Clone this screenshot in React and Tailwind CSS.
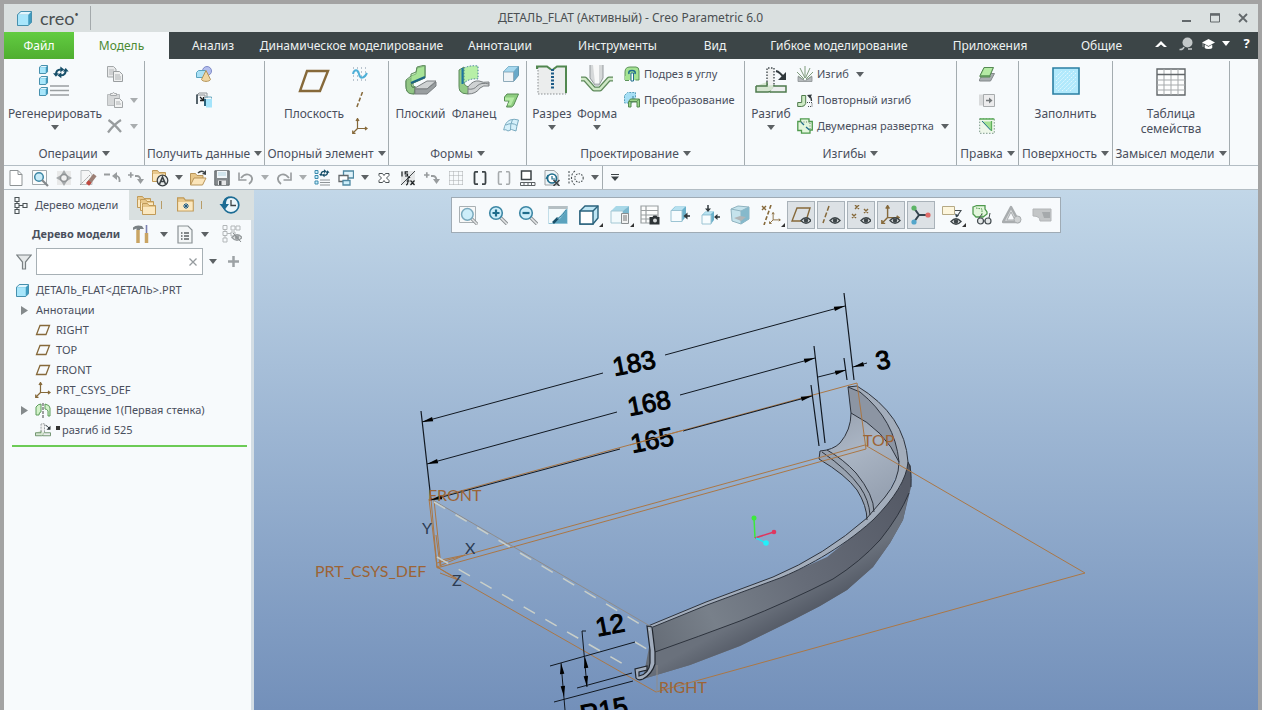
import React, { useState } from 'react'

const teal = '#1f6d8c'
const brown = '#86693a'
const orange = '#ab7745'

function Svg({ w = 16, h = 16, box, children }) {
  return (
    <svg width={w} height={h} viewBox={box || `0 0 ${w} ${h}`} fill="none" className="shrink-0" aria-hidden="true">
      {children}
    </svg>
  )
}

function Down({ pale, light }) {
  return (
    <Svg w={8} h={5}>
      <path d="M0 0h8L4 5z" fill={light ? '#fff' : pale ? '#a9adaf' : '#5c6164'} />
    </Svg>
  )
}

/* shared pieces */
const Cube = ({ x = 0, y = 0, s = 9 }) => (
  <g transform={`translate(${x} ${y})`} strokeLinejoin="round">
    <path d={`M.5 ${s * 0.25}L${s * 0.25} .5H${s - 0.5}V${s * 0.75}L${s * 0.75} ${s - 0.5}H.5z`} fill="#3f9cc0" stroke="#4790ae" />
    <path d={`M1 ${s * 0.25}L${s * 0.27} 1H${s - 1}L${s * 0.75} ${s * 0.25}z`} fill="#e3f6fd" />
    <path d={`M1 ${s * 0.25}H${s * 0.75}V${s - 1}H1z`} fill="#a8e6fb" />
  </g>
)
const Eye = ({ x = 0, y = 0, c = '#3d4548' }) => (
  <g transform={`translate(${x} ${y})`}>
    <path d="M0 3.500Q5 -2 10 3.500Q5 9 0 3.500z" fill="#eef0f1" stroke={c} strokeWidth="1.400" />
    <circle cx="5" cy="3.500" r="2.200" fill={c} />
  </g>
)
const Lens = ({ sign }) => (
  <>
    <path d="M12 12l7 7" stroke="#8b9093" strokeWidth="3.400" />
    <path d="M12.500 12.500l6.500 6.500" stroke="#e4e6e7" strokeWidth="1.600" />
    <circle cx="8" cy="8" r="6.300" fill="#cdeefa" stroke={sign ? '#3d87a5' : '#79a9bd'} strokeWidth="1.600" />
    {sign && <path d={sign === '+' ? 'M4.500 8h7M8 4.500v7' : 'M4.500 8h7'} stroke={teal} strokeWidth="2.200" />}
  </>
)
const FolderShape = ({ x = 0, y = 0 }) => (
  <g transform={`translate(${x} ${y})`}>
    <path d="M.5 2.500V.5h5l1.500 2h6.500v9H.5z" fill="#e8c88c" stroke="#c09a58" />
    <path d="M1 4h12v7H1z" fill="#fbe8c0" />
  </g>
)
const Spin = ({ x = 0, y = 0, k = 1 }) => (
  <g transform={`translate(${x} ${y}) scale(${k})`}>
    <path d="M3 9Q3 3.500 8 3.500M13 4q0 5.500-5 5.500" stroke="#174f69" strokeWidth="2" />
    <path d="M7.500 .5l4 3-4 3zM8.500 6.500l-4 3 4 3zM0 7.500h6L3 11zM10 5.500h6L13 2z" fill="#174f69" />
  </g>
)
const Csys = ({ x = 0, y = 0 }) => (
  <g transform={`translate(${x} ${y})`} stroke={brown} strokeWidth="1.200">
    <path d="M5.500 1v9.500H15M5.500 10.500L1 15M4 3l1.500-2.500L7 3M13 9l2 1.500-2 1.500M.7 12.500v2.800h2.800" />
  </g>
)

/* ribbon icons */
const RegenIcon = () => (
  <Svg w={32} h={32}>
    <Cube y={0} s={9} /><Cube y={11} s={9} /><Cube y={22} s={9} />
    <Spin x={14} y={1} k={0.98} />
    <path d="M11 21h19M11 25.500h19M11 30h19" stroke="#9a9fa1" strokeWidth="1.500" />
  </Svg>
)
const CopyIcon = () => (
  <Svg>
    <path d="M.5 .5h6l2.500 2.500v8H.5z" fill="#e8e9ea" stroke="#a3a7a9" />
    <path d="M2 4h5M2 6h5M2 8h5" stroke="#b5b8ba" />
    <path d="M6.500 5.500h6l3 3v7h-9z" fill="#eff0f0" stroke="#9a9ea0" />
    <path d="M8 9h5M8 11h6M8 13h6" stroke="#acb0b2" />
  </Svg>
)
const PasteIcon = () => (
  <Svg>
    <path d="M.5 2.500h12v11H.5z" fill="#d6d8d9" stroke="#b9bcbe" />
    <path d="M3.500 3.500v-2h2l1-1.200 1 1.200h2v2z" fill="#eee" stroke="#a6aaac" />
    <path d="M7.500 6.500h5l3 3v6h-8z" fill="#f2f3f3" stroke="#a1a5a7" />
    <path d="M9 10h4M9 12h5" stroke="#b0b3b5" />
  </Svg>
)
const DeleteIcon = () => (
  <Svg><path d="M1.500 2C6 5 10 9 14 14M14 2C9 5 5 9 1 14.500" stroke="#989c9e" strokeWidth="2.200" /></Svg>
)
const ShapesIcon = () => (
  <Svg>
    <circle cx="11" cy="5" r="4.500" fill="#b4beee" stroke="#7f8bc6" />
    <path d="M.5 6.500l2-2h7v7h-9z" fill="#a9e0f5" stroke="#5aa3bf" />
    <path d="M10 4.500L5.500 13.500c1 2.500 8 2.500 9 0z" fill="#f0d6a2" stroke="#b39459" />
  </Svg>
)
const CopyGeomIcon = () => (
  <Svg>
    <path d="M1 3l2-2h8v5" fill="#eef0f1" stroke="#8f9497" /><path d="M1 3h8v3" stroke="#8f9497" />
    <path d="M1 2.500v9.500" stroke="#45545d" strokeWidth="1.800" />
    <path d="M4 5l3 3M7.500 5v3.500H4" stroke="#222" strokeWidth="1.300" />
    <path d="M8 7h3v7H8z" fill="#2b637d" /><path d="M10 7h6v8.500h-6z" fill="#a4e4fb" />
    <path d="M8.500 6.500l2-1.500h5v1.500" stroke="#6ba8bf" />
  </Svg>
)
const PlaneIcon = () => (
  <Svg w={32} h={24}><path d="M9 2h21l-8 20H2z" stroke={brown} strokeWidth="2.400" /></Svg>
)
const CurveIcon = () => (
  <Svg>
    <path d="M1 2h14M1 6h14M1 10h14M1 14h14" stroke="#7d8ea0" strokeDasharray="1 3" />
    <path d="M1 8c1-5 5-5 6 0s5 5 8-1" stroke="#4fb0d8" strokeWidth="2" />
  </Svg>
)
const AxisIcon = () => (
  <Svg><path d="M10.500 0L4.500 16" stroke={brown} strokeWidth="1.500" strokeDasharray="4 2" /></Svg>
)
const FlatIcon = () => (
  <Svg w={32} h={30}>
    <path d="M1 16l5-3v7q1 3 5 2l-1 7q-6 0-8-3-1-2-1-5z" fill="#7fa779" stroke="#5d8a5c" />
    <path d="M6 11l5-2 1-6 8-2v11L8 18q-1 3 2 4H7q-3-2-1-6z" fill="#aee79d" stroke="#5d8a5c" />
    <path d="M1 15l5-4V9l5-2 1-5 8-2v13L6 19q0 4 4 4l-1 6q-6 0-7-3-1-2-1-5z" fill="#a2e08f" fillOpacity=".55" stroke="#5d8a5c" />
    <path d="M10 23l12-7h9l-9 8H10z" fill="#cfd2d3" stroke="#7a7f81" />
    <path d="M10 24h12l9-7v4l-9 8H10z" fill="#999ea0" stroke="#7a7f81" />
    <path d="M6 18l14-6" stroke="#1c6484" strokeWidth="2" />
  </Svg>
)
const FlangeIcon = () => (
  <Svg w={32} h={30}>
    <path d="M1 5l5-3v15q0 4 5 5l-1 7q-6 0-8-3-1-2-1-5z" fill="#93cb86" stroke="#5d8a5c" />
    <path d="M6 3Q12 0 20 1v13q-8-1-14 4z" fill="#b7efa7" stroke="#3a7a92" strokeDasharray="1.500 1.500" />
    <path d="M4.500 3v16" stroke="#1c76a3" strokeWidth="2" />
    <path d="M10 22q5-7 11-6 4 2 10 1v4q-6-1-9 2-4 6-12 6z" fill="#cfd2d3" stroke="#7a7f81" />
    <path d="M10 24q6 1 9-3 4-4 12-2" stroke="#7a7f81" />
  </Svg>
)
const ExtrudeIcon = () => (
  <Svg>
    <path d="M.5 6l5-5.500h10v9l-5 6z" fill="#6aa9c9" stroke="#5f97b0" />
    <path d="M.5 6h10v9.500H.5z" fill="#eff3f6" stroke="#8fabba" /><path d="M1 5.500l4.500-5h9.500l-4.500 5z" fill="#a7d8ee" />
  </Svg>
)
const TwistIcon = () => (
  <Svg>
    <path d="M1.500 5L4 2h11.500l-5 11.500-2 1.500H3.500L6 9H1.500z" fill="#8fce80" stroke="#568a53" />
    <path d="M2 5.500h9.500L8 13H4.500L7 8.500H2z" fill="#b5eba4" />
  </Svg>
)
const BoundaryIcon = () => (
  <Svg>
    <path d="M.7 12Q2 4 7 2q4-1.500 8.500 0-2 7-2.500 11-5-3-8 0-2-2-4.300-1z" fill="#d5f0fa" stroke="#7aabc0" />
    <path d="M9.500 1.500Q7 7 7.500 12M3 7q6-3 11 .5" stroke="#7aabc0" />
  </Svg>
)
const RipIcon = () => (
  <Svg w={32} h={30}>
    <path d="M2 2v27h28V2" fill="#ebeded" stroke="#8a8f91" strokeDasharray="1.500 1.500" />
    <path d="M14 1l2 4 2-4z" fill="#f7fafc" />
    <path d="M1 4V1.500h10l4 3M17 4.500l4-3h9V28" stroke="#51874f" strokeWidth="2" />
    <path d="M16.500 4v20" stroke="#1c5a86" strokeWidth="3" strokeDasharray="2 1.500" />
  </Svg>
)
const FormIcon = () => (
  <Svg w={32} h={30}>
    <path d="M9 0h13v13l-4 7h-4l-5-7z" fill="#d5d8d9" /><path d="M12 0h6v18h-4z" fill="#f7f8f8" />
    <path d="M9 0v13l5 7h4l4-7V0" stroke="#959a9d" />
    <path d="M0 14h4l9 10h6l9-10h4" stroke="#5f8a5c" strokeWidth="5" strokeLinejoin="round" />
    <path d="M0 14h4l9 10h6l9-10h4" stroke="#cfe8c6" strokeWidth="2.600" strokeLinejoin="round" />
  </Svg>
)
const ReliefIcon = () => (
  <Svg>
    <path d="M1 14V6Q1 1 6 1h6q3 0 3 4v9h-3.500" fill="#a6e393" stroke="#5d945b" />
    <path d="M1 10h4v4.500H1z" fill="#a6e393" />
    <path d="M7 15V7h2.500v8z" fill="#fff" stroke={teal} />
    <path d="M5 8q-1-3.500 3-3.500T11 8" stroke={teal} strokeWidth="1.600" />
    <path d="M1 14.500h4" stroke="#5d945b" />
  </Svg>
)
const ConvertIcon = () => (
  <Svg>
    <path d="M.5 3.500l3-3h8v5L8 11H.5z" fill="#a6dff5" stroke="#5aa0bb" strokeDasharray="2 1" />
    <path d="M9 4v4" stroke="#3c819c" />
    <path d="M4.500 15V9.500l2-2.500h9v8h-2.500V10h-6v5z" fill="#9ad68a" stroke="#568a53" />
    <path d="M5 9.500h8l2-2.500" stroke="#568a53" />
  </Svg>
)
const UnbendIcon = ({ s = 32 }) => (
  <Svg w={s} h={s === 32 ? 27 : 16} box="0 0 32 27">
    <path d="M12 18V1h7v17" fill="#f1f2f2" stroke="#454d51" strokeWidth="1.400" strokeDasharray="1.500 1.500" />
    <path d="M1 19h11v-4M1 19v6h12q6 0 6-7" fill="#d5e5d0" stroke="#4f7b4d" strokeWidth="1.500" />
    <path d="M19 19h12v6H15" stroke="#4f7b4d" strokeWidth="1.500" fill="#eceeee" />
    <path d="M21 4q4 1 8 7" stroke="#30383c" strokeWidth="2" /><path d="M31 5v8h-8z" fill="#30383c" />
  </Svg>
)
const BendIcon = () => (
  <Svg>
    <path d="M1 10l6 4M0 6l7 7M3 2l5 10M8 0v12M13 2L8.500 12M16 6l-7 7M15 10l-6 4" stroke="#7f9c7d" />
    <path d="M1 15.500v-5l7 4.500 7-4.500v5z" fill="#b5babc" stroke="#8b9193" strokeWidth=".8" />
  </Svg>
)
const RebendIcon = () => (
  <Svg>
    <path d="M.7 10.500h4V3.500h4v8q-1 3-4 3h-4z" fill="#cdeac4" stroke="#4f7b4d" />
    <path d="M10 10.500h5v4h-5" stroke="#454d51" strokeDasharray="1 1" />
    <path d="M14.500 9q0-4-2.500-5.500" stroke="#30383c" strokeWidth="1.300" /><path d="M10 3l5-.5-2 4z" fill="#30383c" />
  </Svg>
)
const FlatPatternIcon = () => (
  <Svg>
    <path d="M3.500 .8H12v2.700h3.300v8.500H13v3.200H4.500V12.500H.8v-9h2.700z" fill="#e3f6dc" stroke="#4f9a4e" strokeWidth="1.300" />
    <path d="M4 4l3 3M12.500 12L9 9" stroke={teal} strokeWidth="1.300" /><path d="M4 4h9v8" stroke="#6d7d75" strokeDasharray="1 1.500" />
  </Svg>
)
const OffsetIcon = () => (
  <Svg>
    <path d="M.5 13.500l4-6h11l-4 7.500H.5z" fill="#a8adaf" stroke="#83888a" />
    <path d="M1 9.500L5 1.500h9.500l-3.500 8v1.500H1z" fill="#6da766" stroke="#568a53" /><path d="M2 9l3.500-7h8L10.500 9z" fill="#b5eba4" />
  </Svg>
)
const ExtendIcon = () => (
  <Svg>
    <path d="M0 2.500h5v11H0" fill="#d9dbdc" /><path d="M4.500 2.500h11v12h-11z" fill="#ececed" stroke="#a7abad" />
    <path d="M7 8.500h3" stroke="#74797b" strokeWidth="1.500" /><path d="M10 5.500l3.500 3-3.500 3z" fill="#74797b" />
  </Svg>
)
const CornerIcon = () => (
  <Svg>
    <path d="M.7 .7h14.600v14.600H.7z" fill="#eef7ea" stroke="#7e998a" strokeDasharray="1.500 1.500" />
    <path d="M3 3.500h9v9z" fill="#a5e295" /><path d="M3 3L12 12.500" stroke={teal} />
    <path d="M.7 1h14.600M12.500 3v10" stroke="#5fae5c" strokeWidth="1.300" />
  </Svg>
)
const FillIcon = () => (
  <Svg w={28} h={28}>
    <path d="M1 1h26v26H1z" fill="#b1e9fc" stroke="#2b7fa2" strokeWidth="1.600" />
    <path d="M4 10l6-6M4 14L14 4M4 18L18 4M4 22L22 4M6 24L24 6M10 24l14-14M14 24l10-10M18 24l6-6" stroke="#e1f8ff" strokeDasharray="2 1" />
  </Svg>
)
const TableIcon = () => (
  <Svg w={30} h={28}>
    <path d="M1 1h28v26H1z" fill="#fdfefe" stroke="#62676a" strokeWidth="1.400" />
    <path d="M8 1v26M15 1v26M22 1v26M1 12h28M1 17h28M1 22h28" stroke="#a6aaac" /><path d="M1 6.500h28" stroke="#62676a" strokeWidth="1.500" />
  </Svg>
)

/* quick access icons */
const quick = {
  new: <Svg w={14} h={18}><path d="M1 1.500h8l4 4v11H1z" fill="#fff" stroke="#8e9395" /><path d="M9 1.500v4h4" stroke="#8e9395" /></Svg>,
  find: <Svg w={18} h={18}><path d="M1.500 1.500h14v14h-14z" fill="#fbfcfc" stroke="#a1a9ad" /><circle cx="8" cy="8" r="4.300" fill="#c9ecf9" stroke="#3d87a5" strokeWidth="1.500" /><path d="M11 11l6 6" stroke="#82888b" strokeWidth="2.200" /></Svg>,
  target: <Svg w={18} h={18}><path d="M2 2h14v14H2z" fill="#e8e9e9" /><path d="M9 1l3 5 5 3-5 3-3 5-3-5-5-3 5-3z" fill="#a6aaac" /><circle cx="9" cy="9" r="3.500" fill="#f0f0f0" stroke="#8f9395" strokeWidth="1.500" /></Svg>,
  erase: <Svg w={18} h={18}><path d="M2 1.500h8l3 4v10H2z" fill="#f5f6f6" stroke="#bbbfc1" /><path d="M1 16L11 6" stroke="#999" strokeDasharray="2 1" /><path d="M9 15l7-9" stroke="#9c8076" strokeWidth="4" /><path d="M8.500 15.500l2.500-3" stroke="#c0483f" strokeWidth="4" /></Svg>,
  minus: <Svg w={18} h={14}><path d="M1 3.500h6" stroke="#989c9e" strokeWidth="2" /><path d="M12 5h2q3 1 2.500 6" stroke="#989c9e" strokeWidth="1.800" /><path d="M9 5l5-4v8z" fill="#989c9e" /></Svg>,
  plus: <Svg w={18} h={14}><path d="M1 4h5.500M3.800 1.200v5.500" stroke="#989c9e" strokeWidth="1.700" /><path d="M8 5h2q3 0 3.500 4" stroke="#989c9e" strokeWidth="1.800" /><path d="M10 8h7l-3.500 5z" fill="#989c9e" /></Svg>,
  auto: <Svg w={18} h={18}><FolderShape x={1} y={1} /><circle cx="11.500" cy="11.500" r="5.300" fill="#e9ecec" stroke="#3c4346" strokeWidth="1.300" /><path d="M8.500 15l3-7 3 7M10 12.500h3" stroke="#3c4346" strokeWidth="1.600" /></Svg>,
  open: <Svg w={18} h={18}><path d="M1.500 16V4.500h5l1.500 2h6V9" fill="#e8c88c" stroke="#b8955a" /><path d="M1.500 16L5 9h12l-3.500 7z" fill="#fbe5ba" stroke="#b8955a" /><path d="M9 4q3-3 6-1" stroke="#3c4346" strokeWidth="1.500" /><path d="M13 5l4-4v5z" fill="#3c4346" /></Svg>,
  save: <Svg w={16} h={16}><path d="M.8 .8h14.400v14.400H.8z" fill="#858a8d" stroke="#62676a" /><path d="M3 1h10v7H3z" fill="#f1f6f9" /><path d="M4 3h8M4 5h8" stroke="#b3d3e0" /><path d="M4 10.500h8V15H4z" fill="#e6e7e8" /><path d="M5 11h2.500v4H5z" fill="#54595c" /></Svg>,
  undo: <Svg w={16} h={14}><path d="M3 7q5-6 10-2 3 4-2 8" stroke="#989c9e" strokeWidth="1.800" /><path d="M1 1.500V9h7.500" stroke="#989c9e" strokeWidth="1.600" /></Svg>,
  redo: <Svg w={16} h={14}><path d="M13 7Q8 1 3 5q-3 4 2 8" stroke="#989c9e" strokeWidth="1.800" /><path d="M15 1.500V9H7.500" stroke="#989c9e" strokeWidth="1.600" /></Svg>,
  regen: <Svg w={16} h={17}><path d="M1 1.500h3v3H1zM1 6.500h3v3H1zM1 12h3v3H1z" fill="#c9effc" stroke="#3c8bad" /><Spin x={5} y={0} k={0.66} /><path d="M6 11h10M6 13.500h10M6 16h10" stroke="#8f9497" /></Svg>,
  windows: <Svg w={16} h={16}><path d="M5.500 1h10v7h-10z" fill="#dff3fb" stroke="#4f89a3" strokeWidth="1.300" /><path d="M1 5.500h9v6H1z" fill="#fff" stroke="#62676a" strokeWidth="1.300" /><path d="M5 10.500h7V15H5z" fill="#cdeffb" stroke="#4f89a3" strokeWidth="1.300" /></Svg>,
  close: <Svg w={12} h={12}><path d="M1 1.500h3.500L6 3.500l1.500-2H11v2L8.500 6 11 8.500v2H7.500L6 8.500l-1.500 2H1v-2L3.500 6 1 3.500z" fill="#fff" stroke="#4b5255" /></Svg>,
  relations: <Svg w={16} h={16}><path d="M1 1h14v14H1z" fill="#e5e7e8" /><path d="M1 15L15 1" stroke="#44494c" /><path d="M2 1.500v5M5 6h2.500V4H5.200V1.800H8" stroke="#1d2224" strokeWidth="1.200" /><path d="M6 15q2 0 2-5t2-2M6.500 11h3M10.500 10.500l4 4.500M14.500 10.500l-4 4.500" stroke="#1d2224" strokeWidth="1.200" /></Svg>,
  grid: <Svg w={14} h={14}><path d="M.5 .5v13M4.500 .5v13M9.500 .5v13M13.500 .5v13M.5 .5h13M.5 4.500h13M.5 9.500h13M.5 13.500h13" stroke="#a9adaf" strokeDasharray="1 1" /></Svg>,
  brackets: <Svg w={14} h={16}><path d="M5 1.800H2.500q-1 0-1 1.500v9.400q0 1.500 1 1.500H5M9 1.800h2.500q1 0 1 1.500v9.400q0 1.500-1 1.500H9" stroke="#3c4346" strokeWidth="1.800" /></Svg>,
  bracketsOff: <Svg w={14} h={16}><path d="M5 1.800H2.500q-1 0-1 1.500v9.400q0 1.500 1 1.500H5M9 1.800h2.500q1 0 1 1.500v9.400q0 1.500-1 1.500H9" stroke="#a6aaac" strokeWidth="1.600" /></Svg>,
  layout: <Svg w={16} h={16}><path d="M1.500 1h9.500v8.500H1.500z" fill="#fff" stroke="#3c4346" strokeWidth="1.500" /><path d="M.5 12.500h14.500v3H.5zM4 12.500v3M8 12.500v3M11.500 12.500v3" stroke="#5c6164" /></Svg>,
  history: <Svg w={16} h={16}><path d="M1 .5h9l4 3.500v11H1z" fill="#eef4f7" stroke="#9ba1a4" /><circle cx="8" cy="8.500" r="4.500" stroke={teal} strokeWidth="1.700" fill="#fff" /><path d="M8 6v3h3M2 9l2-4" stroke={teal} strokeWidth="1.200" /><path d="M9.500 10l6 6M15.500 10l-6 6" stroke="#3c4346" strokeWidth="1.500" /></Svg>,
  pattern: <Svg w={16} h={16}><path d="M1 1v14M7 1Q3.500 3.500 3.500 8T7 15" stroke="#4b5255" strokeWidth="1.100" strokeDasharray="2 1.500" /><circle cx="11" cy="8" r="4.200" stroke="#4b5255" strokeWidth="1.100" strokeDasharray="1.500 1.200" /></Svg>,
}

/* graphics toolbar icons, all on a 20px square */
const graphics = [
  ['Вписать', <><path d="M1.500 1.500h16v16h-16z" fill="#f7f8f8" stroke="#a9b0b3" /><g transform="translate(2 2) scale(.92)"><Lens /></g></>],
  ['Увеличить', <Lens sign="+" />],
  ['Уменьшить', <Lens sign="-" />],
  ['Перерисовать', <><path d="M.5 1h19v18H.5z" fill="#8fc3d6" /><path d="M1 4h17L6 18H1z" fill="#f3fafc" /><path d="M.5 1h19v3H.5z" fill="#b5bfc3" /><path d="M19 4v14H6Q14 14 19 4" fill="#5ba3be" /><path d="M5 18l5-5" stroke="#174f69" strokeWidth="2.600" /><path d="M9 14q6-3 9-9" stroke="#3d87a5" /></>],
  ['Стиль отображения', <><path d="M1 6l5-5h13v12l-5 6H1z" fill="#bfe6f4" stroke="#2b637d" strokeWidth="1.400" /><path d="M1 6h13v13H1z" fill="#fff" stroke="#2b637d" strokeWidth="1.400" /><path d="M14 6l5-5" stroke="#2b637d" strokeWidth="1.400" /></>, true],
  ['Сохраненные ориентации', <><path d="M1 6l5-5h13L14 6z" fill="#a8d8e8" /><path d="M1 6h12v12H1z" fill="#f2fafc" stroke="#a4c8d4" /><path d="M13 6l6-5v8h-6z" fill="#7cb8ce" /><path d="M11.500 8.500h7v10h-7z" fill="#f1f2f2" stroke="#8a8f91" /><path d="M13 11h4M13 13h4M13 15h4" stroke="#777" /></>, true],
  ['Менеджер видов', <><path d="M1 1h17v17H1zM1 5.500h17M1 10h17M1 14h10M6 1v17" fill="#fbfcfc" stroke="#9a9fa1" strokeWidth="1.200" /><path d="M9.500 12h3l1-1.500h3l1 1.500h2v7.500h-10z" fill="#2d3336" /><circle cx="15" cy="15.500" r="2" fill="#d5d8d9" /></>],
  ['Нормаль вида', <><path d="M1 5.500l4-4h11v10l-4 5H1z" fill="#6bb1cb" /><path d="M1 5.500h11v11H1z" fill="#f7fcfe" stroke="#9cc4d3" /><path d="M2 5l3.500-3.500H15.500L12 5z" fill="#b7e1f0" /><path d="M20 11h-4" stroke="#30383c" strokeWidth="1.600" /><path d="M13.500 11l4-3.500v7z" fill="#30383c" /></>],
  ['Ориентация', <><path d="M2 10l3.500-3.500H14V15l-3 4H2z" fill="#6bb1cb" /><path d="M2 10h9v9H2z" fill="#f7fcfe" stroke="#9cc4d3" /><path d="M3 9.500l3-3h7.500l-3 3z" fill="#b7e1f0" /><path d="M8 0v4M20 12h-4" stroke="#30383c" strokeWidth="1.500" /><path d="M8 7L5 3.500h6zM14 12l3.500-3v6z" fill="#30383c" /></>],
  ['Перспектива', <><path d="M1 4l7-3 11 1v12l-8 5-9-3z" fill="#c5e3ec" stroke="#8fb3c0" /><path d="M1 4l10 2v13M11 6l8-4" stroke="#8fb3c0" /><path d="M11 6l8-4v12l-8 5z" fill="#86b9cb" /><path d="M4 13l6-2 6 1-5 4z" fill="#b0b5b7" /></>],
  ['Отображение опорных элементов', <><path d="M1 1l4 4M5 1L1 5" stroke={brown} strokeWidth="1.400" /><path d="M10 0L3 20" stroke={brown} strokeWidth="1.600" strokeDasharray="4 2" /><g transform="translate(8 7) scale(.75)"><Csys /></g></>, true],
  ['Плоскости', <><path d="M6 3h13l-4 13H1z" stroke={brown} strokeWidth="1.400" /><Eye x={10} y={12} /></>, false, true],
  ['Оси', <><path d="M8 1L2 18" stroke={brown} strokeWidth="1.500" strokeDasharray="5 2" /><Eye x={9} y={12} /></>, false, true],
  ['Точки', <><path d="M4 0l4 4M8 0L4 4M13 4l4 4M17 4l-4 4M1 9l4 4M5 9l-4 4" stroke={brown} strokeWidth="1.400" /><Eye x={10} y={12} /></>, false, true],
  ['Системы координат', <><g transform="scale(1.200)"><Csys /></g><Eye x={9} y={12} /></>, false, true],
  ['Центр вращения', <><path d="M3 3l5 7h8M8 10l-5 7" stroke="#33434d" strokeWidth="2" /><circle cx="3" cy="3" r="2.600" fill="#5cb466" /><circle cx="17" cy="10" r="2.600" fill="#df6b68" /><circle cx="3" cy="17" r="2.600" fill="#54a6cb" /></>, false, true],
  ['Аннотации', <><path d="M.5 1.500h12v8H.5z" fill="#fdf6dd" stroke="#b5a985" /><path d="M13 5.500h6l-4 6" stroke="#454d51" strokeWidth="1.200" /><path d="M13 8.500l1 4 3-2z" fill="#33434d" /><Eye x={9} y={13} /></>, true],
  ['Сечения', <><path d="M1 2l4-1.500h8v3.500l2 3v2l-4 3H4L1 9z" fill="#e3f6dc" stroke="#4f9a4e" strokeWidth="1.300" /><path d="M4 3l6 1v8" stroke="#4f9a4e" strokeDasharray="1.500 1" /><circle cx="8.500" cy="16" r="3" fill="#e3e7e8" stroke="#454d51" strokeWidth="1.200" /><circle cx="16" cy="16" r="3" fill="#e3e7e8" stroke="#454d51" strokeWidth="1.200" /><path d="M7 13l3-4M17 13l1-5M11.500 16h1.500" stroke="#454d51" /></>],
  ['Имитация', <><path d="M9 2l8 15H1z" stroke="#a9adaf" strokeWidth="2.500" strokeLinejoin="round" fill="#d9dbdc" /><path d="M9 7l4 8H5z" fill="#f7f9fb" stroke="#a9adaf" /><circle cx="15.500" cy="14.500" r="3.500" fill="#cfd2d3" stroke="#a9adaf" /></>],
  ['Геометрия', <><path d="M1 4h18v12H8q0-5-7-5z" fill="#c3c6c7" stroke="#b3b6b8" /><path d="M10 7h8v6h-6z" fill="#a6aaac" /></>],
]

function RibbonGroup({ title, className, children }) {
  return (
    <section className={`flex shrink-0 flex-col border-r border-[#a4acb0] ${className}`} aria-label={title}>
      <div className="flex h-[81px]">{children}</div>
      <button className="flex h-[23px] items-center justify-center gap-1 whitespace-nowrap">
        {title}
        <Down />
      </button>
    </section>
  )
}

function BigButton({ icon, label, menu, className }) {
  return (
    <button className={`flex shrink-0 flex-col items-center ${className}`}>
      <span className="flex h-[45px] items-start justify-center pt-1">{icon}</span>
      <span className="text-center leading-[15px] whitespace-nowrap">{label}</span>
      {menu && <span className="pt-1"><Down /></span>}
    </button>
  )
}

function SmallButton({ icon, label, title, menu, pale }) {
  return (
    <button className="flex h-[26px] items-center gap-1 text-[11px] whitespace-nowrap" aria-label={title || label}>
      {icon}
      {label}
      {menu && <span className="pl-[3px]"><Down pale={pale} /></span>}
    </button>
  )
}

const tabs = [
  ['Анализ', 'w-[88px]'],
  ['Динамическое моделирование', 'w-[189px]'],
  ['Аннотации', 'w-[108px]'],
  ['Инструменты', 'w-[127px]'],
  ['Вид', 'w-[68px]'],
  ['Гибкое моделирование', 'w-[180px]'],
  ['Приложения', 'w-[122px]'],
  ['Общие', 'w-[101px]'],
]

function TitleBar() {
  return (
    <header className="flex h-[28px] shrink-0 items-center bg-[#dae0e0]">
      <div className="flex h-[24px] w-[87px] items-center gap-2 border-r border-[#a3a9ab] pl-[13px]">
        <Svg w={15} h={15}><Cube s={15} /></Svg>
        <span className="font-[Lato,sans-serif] text-[18px] leading-5 text-[#4b5052]">creo<sup className="-top-2 text-[7px]">•</sup></span>
      </div>
      <h1 className="flex-1 text-center text-[12px] text-[#4a4f52]">ДЕТАЛЬ_FLAT (Активный) - Creo Parametric 6.0</h1>
      <div className="flex w-[88px] items-center gap-3 pl-[9px]">
        <button aria-label="Свернуть" className="flex w-4 justify-center">
          <Svg w={14} h={14}><path d="M2 10h9" stroke="#62686b" strokeWidth="2" /></Svg>
        </button>
        <button aria-label="Развернуть" className="flex w-4 justify-center">
          <Svg w={12} h={12}><path d="M1.500 2h9v8h-9z" stroke="#62686b" /><path d="M1 2.500h10" stroke="#62686b" strokeWidth="2.500" /></Svg>
        </button>
        <button aria-label="Закрыть" className="flex w-4 justify-center">
          <Svg w={10} h={10}><path d="M1 1l8 8M9 1L1 9" stroke="#62686b" strokeWidth="1.800" /></Svg>
        </button>
      </div>
    </header>
  )
}

function TabBar() {
  return (
    <nav className="flex h-[27px] shrink-0 items-stretch bg-[#3c4547] text-[12px] whitespace-nowrap text-[#eef2f2]">
      <button className="w-[70px] shrink-0 bg-linear-to-b from-[#62cc41] to-[#4fae30] text-white">Файл</button>
      <button className="w-[95px] shrink-0 bg-[#f7fafc] text-[#4c8a32]">Модель</button>
      {tabs.map(([name, width]) => (
        <button key={name} className={`${width} flex shrink-0 items-center justify-center`}>{name}</button>
      ))}
      <div className="flex flex-1 items-center justify-end pr-[7px] pb-[4px]">
        <button aria-label="Свернуть ленту" className="w-[24px]">
          <Svg w={12} h={7}><path d="M0 7l6-6 6 6H9L6 4.500 3 7z" fill="#fff" /></Svg>
        </button>
        <button aria-label="Поиск" className="w-[23px]">
          <Svg w={14} h={14}><circle cx="8.500" cy="5.500" r="5" fill="#c3c8c9" /><path d="M5 10q-1 3-4.500 2.500M9 12h4" stroke="#c3c8c9" strokeWidth="1.500" /></Svg>
        </button>
        <button aria-label="Обучение" className="w-[20px]">
          <Svg w={13} h={10}><path d="M0 3.500L6.500 0 13 3.500 6.500 7z" fill="#fff" /><path d="M3 6v3q3.500 2 7 0V6L6.500 8zM1 4v4" fill="#fff" stroke="#fff" strokeWidth=".5" /></Svg>
        </button>
        <button aria-label="Меню справки" className="w-[20px]"><Down light /></button>
        <button className="w-[9px] text-[13px] font-bold text-white">?</button>
      </div>
    </nav>
  )
}

function Ribbon() {
  return (
    <div className="flex h-[107px] shrink-0 border-b border-[#b3bdc4] pt-[2px]">
      <RibbonGroup title="Операции" className="w-[141px]">
        <BigButton className="ml-[5px] w-[92px]" icon={<RegenIcon />} label="Регенерировать" menu />
        <div className="ml-[6px]">
          <SmallButton title="Копировать" icon={<CopyIcon />} />
          <SmallButton title="Вставить" icon={<PasteIcon />} menu pale />
          <SmallButton title="Удалить" icon={<DeleteIcon />} menu pale />
        </div>
      </RibbonGroup>
      <RibbonGroup title="Получить данные" className="w-[120px]">
        <div className="ml-[51px]">
          <SmallButton title="Определяемый пользователем элемент" icon={<ShapesIcon />} />
          <SmallButton title="Копировать геометрию" icon={<CopyGeomIcon />} />
        </div>
      </RibbonGroup>
      <RibbonGroup title="Опорный элемент" className="w-[124px]">
        <BigButton className="ml-[16px] w-[66px]" icon={<span className="pt-1"><PlaneIcon /></span>} label="Плоскость" />
        <div className="ml-[5px]">
          <SmallButton title="Эскиз" icon={<CurveIcon />} />
          <SmallButton title="Ось" icon={<AxisIcon />} />
          <SmallButton title="Система координат" icon={<Svg><Csys /></Svg>} />
        </div>
      </RibbonGroup>
      <RibbonGroup title="Формы" className="w-[138px]">
        <BigButton className="ml-[4px] w-[55px]" icon={<FlatIcon />} label="Плоский" />
        <BigButton className="w-[52px]" icon={<FlangeIcon />} label="Фланец" />
        <div className="ml-[3px]">
          <SmallButton title="Вытянуть" icon={<ExtrudeIcon />} />
          <SmallButton title="Скрутить" icon={<TwistIcon />} />
          <SmallButton title="По границам" icon={<BoundaryIcon />} />
        </div>
      </RibbonGroup>
      <RibbonGroup title="Проектирование" className="w-[218px]">
        <BigButton className="ml-[2px] w-[46px]" icon={<RipIcon />} label="Разрез" menu />
        <BigButton className="w-[44px]" icon={<FormIcon />} label="Форма" menu />
        <div className="ml-[5px]">
          <SmallButton icon={<ReliefIcon />} label="Подрез в углу" />
          <SmallButton icon={<ConvertIcon />} label="Преобразование" />
        </div>
      </RibbonGroup>
      <RibbonGroup title="Изгибы" className="w-[212px]">
        <BigButton className="w-[52px]" icon={<span className="pt-[2px]"><UnbendIcon /></span>} label="Разгиб" menu />
        <div>
          <SmallButton icon={<BendIcon />} label="Изгиб" menu />
          <SmallButton icon={<RebendIcon />} label="Повторный изгиб" />
          <SmallButton icon={<FlatPatternIcon />} label="Двумерная развертка" menu />
        </div>
      </RibbonGroup>
      <RibbonGroup title="Правка" className="w-[62px]">
        <div className="ml-[22px]">
          <SmallButton title="Сместить" icon={<OffsetIcon />} />
          <SmallButton title="Продлить" icon={<ExtendIcon />} />
          <SmallButton title="Угол" icon={<CornerIcon />} />
        </div>
      </RibbonGroup>
      <RibbonGroup title="Поверхность" className="w-[94px]">
        <BigButton className="w-full" icon={<span className="pt-[2px]"><FillIcon /></span>} label="Заполнить" />
      </RibbonGroup>
      <RibbonGroup title="Замысел модели" className="w-[117px]">
        <BigButton className="w-full" icon={<span className="pt-[3px]"><TableIcon /></span>} label={<>Таблица<br />семейства</>} />
      </RibbonGroup>
    </div>
  )
}

const quickItems = [
  'new', 'find', 'target', 'erase', 'minus', 'plus', 'auto', 'menu', 'open', 'save', 'undo', 'menu-pale',
  'redo', 'menu-pale', 'regen', 'windows', 'menu', 'close', 'relations', 'plus', 'grid', 'brackets',
  'bracketsOff', 'layout', 'history', 'pattern', 'menu',
]

function QuickBar() {
  return (
    <div className="flex h-[24px] shrink-0 items-stretch border-b border-[#b3bdc4]">
      {quickItems.map((item, i) => (
        <button key={i} aria-label={item} className={`flex shrink-0 items-center justify-center ${item.startsWith('menu') ? 'w-[14px]' : 'w-[24px]'}`}>
          {item.startsWith('menu') ? <Down pale={item === 'menu-pale'} /> : quick[item]}
        </button>
      ))}
      <button aria-label="Настроить панель" className="flex w-[24px] items-center justify-center border-l border-[#a4acb0]">
        <Svg w={8} h={7}><path d="M0 .5h8" stroke="#3c4346" /><path d="M0 2.500h8L4 7z" fill="#3c4346" /></Svg>
      </button>
    </div>
  )
}

const SmallPlane = () => <Svg w={16} h={16}><path d="M5 3.500h9.500L11 12.500H1.500z" stroke={brown} strokeWidth="1.300" /></Svg>

const tree = [
  { label: 'Аннотации', arrow: true },
  { label: 'RIGHT', icon: <SmallPlane /> },
  { label: 'TOP', icon: <SmallPlane /> },
  { label: 'FRONT', icon: <SmallPlane /> },
  { label: 'PRT_CSYS_DEF', icon: <Svg><Csys /></Svg> },
  {
    label: 'Вращение 1(Первая стенка)',
    arrow: true,
    icon: <Svg><path d="M1 5q2-3 5-3v8q-2 0-2 3H1zM10 2q5 1 5 4v8h-2V9q-1-2-3-2z" fill="#d3f2ca" stroke="#5d9c5b" /><path d="M8 1v15" stroke="#444" strokeDasharray="3 1" /></Svg>,
  },
  { label: 'разгиб id 525', mark: true, icon: <UnbendIcon s={16} /> },
]

function Sidebar() {
  const [query, setQuery] = useState('')

  return (
    <aside className="flex w-[250px] shrink-0 flex-col border-r-[3px] border-[#d3dde4] bg-[#f7fafc]">
      <div className="-mr-[3px] flex h-[30px] bg-[#d9e0e0]">
        <button className="flex w-[125px] items-center gap-[7px] bg-[#f7fafc] pl-[10px] text-[11px] whitespace-nowrap">
          <Svg w={14} h={18}><path d="M1 1.500h4v4H1zM1 7.500h4v4H1zM1 13.500h4v4H1zM9 7.500h4v4H9zM3 5.500v2M3 11.500v2M5 9.500h4" stroke="#4b5255" strokeWidth="1.100" /></Svg>
          Дерево модели
        </button>
        <button aria-label="Папки" className="flex w-[40px] items-center gap-1 pl-[8px]">
          <Svg w={20} h={20}><FolderShape x={0} y={1} /><FolderShape x={3} y={4} /><FolderShape x={5} y={8} /></Svg>
          <span className="h-2 w-px bg-[#b79c68]" />
        </button>
        <button aria-label="Избранное" className="flex w-[40px] items-center gap-1 pl-[8px]">
          <Svg w={20} h={18}><g transform="scale(1.200)"><FolderShape x={0} y={1} /></g><path d="M9 7v6M6 10h6M7 8l4 4M11 8l-4 4" stroke="#1c5a86" /></Svg>
          <span className="h-2 w-px bg-[#b79c68]" />
        </button>
        <button aria-label="История" className="flex flex-1 items-center pl-[10px]">
          <Svg w={22} h={20}><circle cx="12" cy="10" r="7.800" fill="#eaf5fa" stroke="#1c6c94" strokeWidth="1.700" /><path d="M12 5v5.500h5" stroke="#3c4346" strokeWidth="1.300" /><path d="M11 1Q4 2 4 9H.5l5 6 4.500-6H7q0-5 4-8z" fill="#1c6c94" /></Svg>
        </button>
      </div>

      <div className="flex h-[28px] items-center pl-[28px]">
        <h2 className="w-[100px] text-[11px] font-bold whitespace-nowrap">Дерево модели</h2>
        <button aria-label="Настройки" className="flex w-[45px] items-center gap-[8px]">
          <Svg w={20} h={20}>
            <path d="M6 6v13" stroke="#c9a463" strokeWidth="3.500" /><path d="M1 3.500q3-3 9-1.500l2 3H8v1H4.500V4.500L1 6z" fill="#7a8184" />
            <path d="M14.500 1v8" stroke="#7a80b0" strokeWidth="1.600" /><path d="M14.500 9v10" stroke="#c9a463" strokeWidth="3.500" />
          </Svg>
          <Down />
        </button>
        <button aria-label="Показать" className="flex w-[45px] items-center gap-[8px]">
          <Svg w={16} h={19}><path d="M1 1h10l4 4v13H1z" fill="#f3f6f7" stroke="#8a9194" strokeWidth="1.200" /><path d="M4 8h1.500M4 11h1.500M4 14h1.500M7 8h5M7 11h5M7 14h5" stroke="#5c6164" strokeWidth="1.300" /></Svg>
          <Down />
        </button>
        <button aria-label="Скрыть дерево">
          <Svg w={20} h={20}><path d="M1 1.500h4v4H1zM1 7.500h4v4H1zM1 14h4v4H1zM9 2h4v4H9zM14 2h4v4h-4zM9 8h4v4H9zM3 5.500v2M3 11.500V14M5 9.500h4" stroke="#b3b7b9" /><Eye x={10} y={10} c="#999ea0" /><path d="M11 9l8 9" stroke="#888d8f" /></Svg>
        </button>
      </div>

      <div className="flex h-[27px] items-center pl-[12px]">
        <Svg w={16} h={16}><path d="M.7 1h14.600L9.500 8v7h-3V8z" fill="#e5e8e9" stroke="#7a8083" strokeWidth="1.200" /></Svg>
        <label className="ml-1 flex h-[27px] w-[167px] items-center border border-[#a7b0b5] bg-white">
          <input
            type="text"
            aria-label="Фильтр дерева"
            className="w-full min-w-0 flex-1 px-1 text-[12px] outline-none"
            value={query}
            onChange={(e) => setQuery(e.target.value)}
          />
          <button aria-label="Очистить" className="px-[5px]" onClick={() => setQuery('')}>
            <Svg w={8} h={8}><path d="M.5 .5l7 7M7.500 .5l-7 7" stroke="#959b9e" strokeWidth="1.300" /></Svg>
          </button>
        </label>
        <button aria-label="Варианты фильтра" className="ml-[6px]"><Down /></button>
        <button aria-label="Добавить" className="ml-[11px]">
          <Svg w={11} h={11}><path d="M5.500 0v11M0 5.500h11" stroke="#9da2a5" strokeWidth="2.500" /></Svg>
        </button>
      </div>

      <ul className="mt-[5px] text-[11px] leading-5 whitespace-nowrap text-[#4a4f5c]">
        <li className="flex items-center gap-[7px] pl-[12px]">
          <Svg w={13} h={13}><Cube s={13} /></Svg>
          ДЕТАЛЬ_FLAT&lt;ДЕТАЛЬ&gt;.PRT
        </li>
        {tree.map((node) => (
          <li key={node.label} className="flex h-5 items-center pl-[16px]">
            <span className="flex w-4 shrink-0 items-center pl-[1px]">
              {node.arrow && <Svg w={7} h={9}><path d="M0 0v9l7-4.500z" fill="#858a8c" /></Svg>}
            </span>
            {node.icon && <span className="mr-1 -ml-px flex w-[17px] shrink-0">{node.icon}</span>}
            {node.mark && <span className="mr-[2px] mb-1 size-1 bg-[#333]" />}
            {node.label}
          </li>
        ))}
      </ul>
      <div className="mt-[5px] mr-[4px] ml-[8px] h-[2px] bg-[#6ccb56]" />
    </aside>
  )
}

function GraphicsBar() {
  return (
    <div className="relative z-10 flex h-[36px] items-center gap-[2px] border border-[#9fabb5] bg-[#f7fafc] pr-[4px] pl-[2px]">
      {graphics.map(([name, art, menu, on]) => (
        <button
          key={name}
          aria-label={name}
          aria-pressed={!!on}
          className={`relative flex h-[28px] items-center justify-center ${menu ? 'w-[29px]' : 'w-[28px]'} ${on ? 'border border-[#a9b2b9] bg-[#dce1e5]' : ''}`}
        >
          <Svg w={20} h={20}>{art}</Svg>
          {menu && <span className="absolute right-0 bottom-[2px]"><Svg w={4} h={4}><path d="M4 0v4H0z" fill="#333" /></Svg></span>}
        </button>
      ))}
    </div>
  )
}

// arrowhead with its tip on x,y; a is the direction in degrees
const Tip = ({ x, y, a }) => <path d="M0 0l-11 -2.200v4.400z" transform={`translate(${x} ${y}) rotate(${a})`} fill="#000" />

const Dim = ({ x, y, children }) => (
  <text
    transform={`translate(${x} ${y}) rotate(-11)`}
    textAnchor="middle"
    dominantBaseline="central"
    className="font-['Liberation_Sans',sans-serif] text-[26px]"
    fill="#000"
    stroke="#000"
    strokeWidth="1"
  >
    {children}
  </text>
)

function Model() {
  return (
    <svg width="1004" height="520" viewBox="254 190 1004 520" fill="none" className="absolute top-0 left-0" role="img" aria-label="Модель детали">
      <defs>
        <linearGradient id="wall" x1="650" y1="640" x2="912" y2="500" gradientUnits="userSpaceOnUse">
          <stop offset="0" stopColor="#666d77" />
          <stop offset=".22" stopColor="#78808a" />
          <stop offset=".55" stopColor="#666c78" />
          <stop offset="1" stopColor="#555a66" />
        </linearGradient>
        <linearGradient id="lower" x1="750" y1="615" x2="765" y2="642" gradientUnits="userSpaceOnUse">
          <stop offset="0" stopColor="#6a717c" />
          <stop offset="1" stopColor="#515763" />
        </linearGradient>
        <linearGradient id="inside" x1="840" y1="400" x2="890" y2="490" gradientUnits="userSpaceOnUse">
          <stop offset="0" stopColor="#959eac" />
          <stop offset=".5" stopColor="#aab5c4" />
          <stop offset="1" stopColor="#97a2b2" />
        </linearGradient>
      </defs>

      {/* bent flange, seen from inside */}
      <path d="M848 387L851 413Q851 430 840 443Q833 450 820 451L819 459Q846 475 857 490Q867 506 867 520L886 497L899 470L900 460L893 436L880 413L860 392z" fill="url(#inside)" />
      <path d="M848 387L851 413Q885 430 899 462Q895 420 860 392z" fill="#8c95a3" />
      <path d="M820 451L819 459Q846 475 857 490Q867 506 867 520L874 512Q873 495 856 473Q843 459 827 450z" fill="#98a2b0" />

      {/* outer wall */}
      <path d="M908 462L911 466V487L903 520L890 543L873 567L847 590L820 606L793 620L740 646L690 665L643 679L653 626L707 605L780 578L827 557L873 520L900 487z" fill="url(#wall)" />
      <path d="M910 487L903 520L890 543L873 567L847 590L820 606L793 620L740 646L690 665L643 679Q655 672 655 652Q700 636 740 621Q790 601 833 579Q860 562 880 540Q900 515 909 493z" fill="url(#lower)" />
      <path d="M848 387L857 386Q905 415 908 462Q906 487 873 520C840 550 800 570 780 578L707 605L653 627L648 626L706 602L773 577Q825 555 867 518L885 497Q899 480 899 462Q895 420 860 392z" fill="#a3adbb" />
      <g stroke="#2d333d">
        <path d="M848 387L857 386Q905 415 908 462Q906 487 873 520C840 550 800 570 780 578L707 605L653 627" />
        <path d="M848 387L860 392Q895 420 899 462Q899 480 885 497L867 518Q825 555 773 577L706 602L648 626" />
        <path d="M908 462Q912 468 911 487" />
        <path d="M848 387L851 413Q851 430 840 443Q833 450 820 451L819 459Q846 475 857 490Q867 506 867 520" />
        <path d="M851 413Q885 430 899 462M822 452Q848 470 860 487Q869 500 870 515M827 450Q843 459 856 473Q874 495 874 512" />
        <path d="M909 493Q900 515 880 540Q860 562 833 579Q790 601 740 621Q700 636 655 652" />
      </g>
      <path d="M647 626L652 627L655 652V664Q652 674 643 679Q638 681 636 678L635 669L647 666V670L639 672V676Q649 674 650 663V650z" fill="#a2adbd" stroke="#20252d" strokeWidth="1.200" />

      {/* datum planes */}
      <g stroke={orange}>
        <path d="M431 499L857 383L866 449L437 568z" />
        <path d="M437 563L865 445L1085 573L656 692L437 567L429 499M434 500l7 67M437 567l28-12-24 5M437 567l21 13-18-7M436 535l4 30" />
      </g>
      <path d="M431 499L650 626M657 665V692" stroke="#8e8c8b" />
      <path d="M434 502L650 630M437 557L630 668M635 642l12 7" stroke="#c9cfc9" strokeWidth="1.500" strokeDasharray="13 12" />

      {/* dimensions */}
      <g stroke="#111821">
        <path d="M421 411L431 500M844 293L854 380M814 346L825 443M811 385L819 446M844 358L847 380" strokeWidth="1.200" />
        <path d="M422 422L603 373M665 355L845 306M427 464L617 412M680 395L815 358M431 500L620 449M683 431L812 396" />
        <path d="M818 377L846 370M867 363L853 367" />
        <path d="M586 631h-4L587 687M550 666L635 642M577 688L632 673M554 702L633 681M561 663L565 710" />
      </g>
      <Tip x={422} y={422} a={165} />
      <Tip x={845} y={306} a={-15} />
      <Tip x={427} y={464} a={165} />
      <Tip x={815} y={358} a={-15} />
      <Tip x={431} y={500} a={165} />
      <Tip x={812} y={396} a={-15} />
      <Tip x={846} y={370} a={-15} />
      <Tip x={853} y={367} a={165} />
      <Tip x={585} y={657} a={-96} />
      <Tip x={587} y={687} a={84} />
      <Tip x={561} y={663} a={-96} />
      <Tip x={564} y={697} a={84} />
      <Dim x={634} y={363}>183</Dim>
      <Dim x={649} y={403}>168</Dim>
      <Dim x={652} y={440}>165</Dim>
      <Dim x={883} y={360}>3</Dim>
      <Dim x={610} y={625}>12</Dim>
      <Dim x={604} y={710}>R15</Dim>
      <path d="M630 445L684 430" stroke={orange} />

      <g className="font-[Lato,sans-serif] text-[16px]" fill="#9c6436">
        <text x="315" y="577">PRT_CSYS_DEF</text>
        <text x="428" y="501">FRONT</text>
        <text x="863" y="446">TOP</text>
        <text x="659" y="693">RIGHT</text>
      </g>
      <g className="font-[Lato,sans-serif] text-[16px]" fill="#2c3c54">
        <text x="422" y="534">Y</text>
        <text x="465" y="554">X</text>
        <text x="452" y="586">Z</text>
      </g>

      <path d="M755 538L754 518" stroke="#3bea3b" strokeWidth="1.500" />
      <path d="M755 538L774 532" stroke="#e0365e" strokeWidth="1.500" />
      <path d="M756 538L766 543" stroke="#22e6f2" strokeWidth="1.500" />
      <circle cx="754" cy="518" r="2.500" fill="#3bea3b" />
      <circle cx="774" cy="532" r="2.300" fill="#e0365e" />
      <circle cx="766" cy="543" r="2.800" fill="#22f0fa" />
    </svg>
  )
}

export default function App() {
  return (
    <div className="flex h-screen flex-col overflow-hidden border-x-4 border-t-4 border-[#a3a3a3] bg-[#f7fafc] font-['Noto_Sans',sans-serif] text-[12px] text-[#4a4f5c]">
      <TitleBar />
      <TabBar />
      <Ribbon />
      <QuickBar />
      <div className="flex min-h-0 flex-1">
        <Sidebar />
        <main className="relative flex flex-1 items-start justify-center overflow-hidden bg-linear-to-b from-[#c2d7e8] to-[#7390ba] pt-[7px]">
          <Model />
          <GraphicsBar />
        </main>
      </div>
    </div>
  )
}
